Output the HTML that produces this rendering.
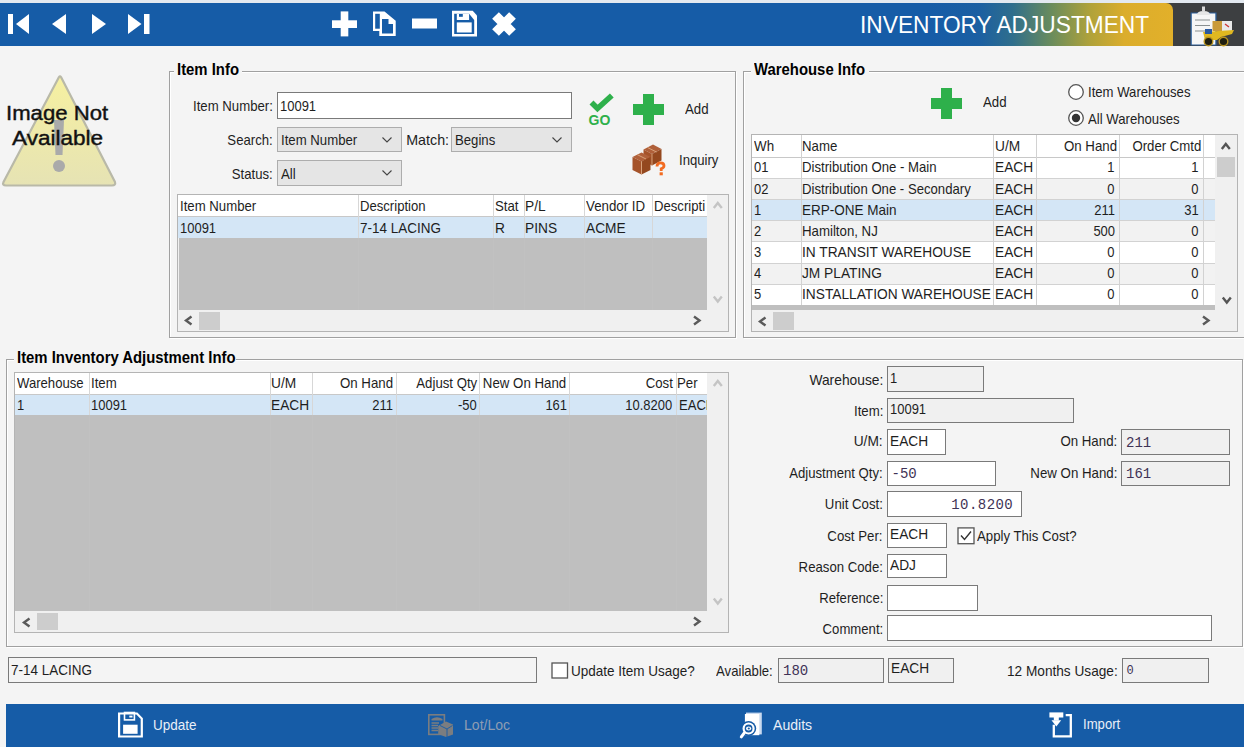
<!DOCTYPE html>
<html><head><meta charset="utf-8"><title>Inventory Adjustment</title>
<style>
html,body{margin:0;padding:0}
body{width:1244px;height:747px;position:relative;overflow:hidden;background:#f4f4f4;font-family:"Liberation Sans",sans-serif;color:#1e1e1e}
.a{position:absolute;box-sizing:border-box}
svg.a{overflow:visible}
.t{position:absolute;white-space:nowrap}
</style></head><body>
<div class="a" style="left:0px;top:0px;width:1244px;height:3px;background:#e3e9f0;"></div>
<div class="a" style="left:0px;top:3px;width:930px;height:43px;background:#165ca7;"></div>
<div class="a" style="left:1160px;top:3px;width:84px;height:43px;background:#3d3f41;"></div>
<div class="a" style="left:930px;top:3px;width:243px;height:43px;background:linear-gradient(90deg,#165ca7 0%,#1b5fa2 20%,#2f6e8c 34%,#6a8c5c 50%,#b0a23a 66%,#dbad2c 80%,#e2b02a 100%);border-top-right-radius:7px;"></div>
<div class="t" style="top:13.82px;font-size:23.5px;line-height:23.5px;color:#ffffff;left:860px;transform-origin:0 0;transform:scaleX(0.967);">INVENTORY ADJUSTMENT</div>
<svg class="a" style="left:0px;top:3px" width="160" height="43" viewBox="0 0 160 43"><rect x="8" y="11" width="5" height="20" fill="#fff"/><polygon points="16,21 29,11 29,31" fill="#fff"/><polygon points="52,21 66,11 66,31" fill="#fff"/><polygon points="92,11 92,31 106,21" fill="#fff"/><polygon points="128,11 128,31 141.5,21" fill="#fff"/><rect x="144" y="11" width="5.5" height="20" fill="#fff"/></svg>
<svg class="a" style="left:320px;top:3px" width="210" height="43" viewBox="0 0 210 43"><rect x="12" y="17.3" width="25" height="7.7" fill="#fff"/><rect x="20.7" y="8.4" width="7.6" height="25" fill="#fff"/><polygon points="53,8.4 64.5,8.4 75.7,17.7 75.7,33 59.3,33 59.3,28.1 53,28.1" fill="#fff"/><rect x="55.2" y="10.8" width="4.6" height="14.9" fill="#165ca7"/><polygon points="62,16 68.5,16 68.5,21 73,21 73,30.5 62,30.5" fill="#165ca7"/><rect x="92" y="15.5" width="25" height="10" fill="#fff"/><polygon points="132,7.8 152.7,7.8 157,12.399999999999999 157,33.4 132,33.4" fill="#fff"/><polygon points="134.2,10.7 149.1,10.7 154.2,17.0 154.2,31.0 134.2,31.0" fill="#165ca7"/><rect x="136.8" y="10.7" width="12.3" height="6.3" fill="#fff"/><rect x="139" y="11.0" width="3.8" height="2.8" fill="#165ca7"/><rect x="136.8" y="19.4" width="14.9" height="10.1" fill="#fff"/><path d="M175.5,12.5 L192.5,29.5 M192.5,12.5 L175.5,29.5" stroke="#fff" stroke-width="9.5"/></svg>
<svg class="a" style="left:1173px;top:3px" width="71" height="43" viewBox="0 0 71 43"><rect x="17.6" y="9.5" width="26" height="33" fill="#2c5f9a"/><rect x="18.8" y="10.5" width="23.5" height="31" fill="#f6f6f6"/><path d="M24,12 Q24,8 30.5,8 Q37,8 37,12 Z" fill="#e6e6e6"/><rect x="29" y="3.5" width="3" height="5" fill="#d8d8d8"/><path d="M22,17 H37 M22,22.5 H37 M22,28 H34" stroke="#8a9090" stroke-width="1.1"/><rect x="39.5" y="18" width="9.5" height="10" fill="#c99a3a"/><rect x="49" y="18" width="10" height="10.5" fill="#e9e9e9"/><path d="M52,21 L56,24" stroke="#c33" stroke-width="1.3"/><polygon points="30,29 61,27 59,31 48,34 44,37 32,37" fill="#e0b820"/><rect x="32" y="26" width="7" height="5" fill="#2a5aa0"/><circle cx="35.5" cy="38.5" r="4.3" fill="#1f1f10" stroke="#b89420" stroke-width="1.4"/><circle cx="50.5" cy="38.5" r="4.3" fill="#1f1f10" stroke="#b89420" stroke-width="1.4"/></svg>
<svg class="a" style="left:0px;top:70px" width="122" height="122" viewBox="0 0 122 122"><defs><linearGradient id="tg" x1="0" y1="0" x2="0" y2="1"><stop offset="0" stop-color="#f6f0a0"/><stop offset="1" stop-color="#e6e3b4"/></linearGradient></defs><path d="M59,7 Q60,5.5 61,7 L115,112 Q116,115.5 112,115.5 L6,115.5 Q2,115.5 3.5,112 Z" fill="url(#tg)" stroke="#b9b9a8" stroke-width="2.2" stroke-linejoin="round"/><path d="M54,50 H64 L62.5,85 H55.5 Z" fill="#aaaaaa"/><circle cx="59" cy="96" r="6" fill="#aaaaaa"/></svg>
<div class="t" style="top:103.17px;font-size:20.5px;line-height:20.5px;color:#111;left:6px;transform-origin:0 0;transform:scaleX(1.08);-webkit-text-stroke:0.4px #111;">Image Not</div>
<div class="t" style="top:127.98px;font-size:20.5px;line-height:20.5px;color:#111;left:11.5px;transform-origin:0 0;transform:scaleX(1.1);-webkit-text-stroke:0.4px #111;">Available</div>
<div class="a" style="left:170px;top:72px;width:567px;height:267px;border:1px solid #ffffff;"></div>
<div class="a" style="left:169px;top:71px;width:567px;height:267px;border:1px solid #a0a0a0;"></div>
<div class="a" style="left:174.2px;top:69px;width:68px;height:5px;background:#f4f4f4;"></div>
<div class="t" style="top:62.10px;font-size:16px;line-height:16px;color:#000;font-weight:700;left:177.2px;transform-origin:0 0;transform:scaleX(0.93);">Item Info</div>
<div class="a" style="left:744px;top:72px;width:505px;height:267px;border:1px solid #ffffff;"></div>
<div class="a" style="left:743px;top:71px;width:505px;height:267px;border:1px solid #a0a0a0;"></div>
<div class="a" style="left:750.6px;top:69px;width:118.4px;height:5px;background:#f4f4f4;"></div>
<div class="t" style="top:62.20px;font-size:16px;line-height:16px;color:#000;font-weight:700;left:753.6px;transform-origin:0 0;transform:scaleX(0.93);">Warehouse Info</div>
<div class="a" style="left:7px;top:360px;width:1237px;height:288px;border:1px solid #ffffff;"></div>
<div class="a" style="left:6px;top:359px;width:1237px;height:288px;border:1px solid #a0a0a0;"></div>
<div class="a" style="left:14.2px;top:357px;width:222px;height:5px;background:#f4f4f4;"></div>
<div class="t" style="top:349.80px;font-size:16px;line-height:16px;color:#000;font-weight:700;left:17.2px;transform-origin:0 0;transform:scaleX(0.93);">Item Inventory Adjustment Info</div>
<div class="t" style="top:98.25px;font-size:15px;line-height:15px;right:971px;transform-origin:100% 0;transform:scaleX(0.879);">Item Number:</div>
<div class="a" style="left:277px;top:92px;width:295px;height:27px;background:#fff;border:1px solid #7a7a7a;box-sizing:border-box;"></div>
<div class="t" style="top:97.75px;font-size:15px;line-height:15px;left:280.2px;transform-origin:0 0;transform:scaleX(0.865);">10091</div>
<div class="t" style="top:131.95px;font-size:15px;line-height:15px;right:971px;transform-origin:100% 0;transform:scaleX(0.877);">Search:</div>
<div class="a" style="left:277px;top:127px;width:125px;height:25px;background:#e5e5e5;border:1px solid #adadad;box-sizing:border-box;"></div>
<div class="t" style="top:131.95px;font-size:15px;line-height:15px;left:281.3px;transform-origin:0 0;transform:scaleX(0.879);">Item Number</div>
<svg class="a" style="left:381px;top:134.5px" width="12" height="10" viewBox="0 0 12 10"><path d="M1.5,2.5 L6,7 L10.5,2.5" fill="none" stroke="#444" stroke-width="1.1"/></svg>
<div class="t" style="top:131.95px;font-size:15px;line-height:15px;right:794.5px;transform-origin:100% 0;transform:scaleX(0.95);">Match:</div>
<div class="a" style="left:451px;top:127px;width:121px;height:25px;background:#e5e5e5;border:1px solid #adadad;box-sizing:border-box;"></div>
<div class="t" style="top:131.95px;font-size:15px;line-height:15px;left:455.3px;transform-origin:0 0;transform:scaleX(0.877);">Begins</div>
<svg class="a" style="left:551px;top:134.5px" width="12" height="10" viewBox="0 0 12 10"><path d="M1.5,2.5 L6,7 L10.5,2.5" fill="none" stroke="#444" stroke-width="1.1"/></svg>
<div class="t" style="top:165.75px;font-size:15px;line-height:15px;right:971px;transform-origin:100% 0;transform:scaleX(0.877);">Status:</div>
<div class="a" style="left:277px;top:160px;width:125px;height:26px;background:#e5e5e5;border:1px solid #adadad;box-sizing:border-box;"></div>
<div class="t" style="top:165.75px;font-size:15px;line-height:15px;left:281.3px;transform-origin:0 0;transform:scaleX(0.885);">All</div>
<svg class="a" style="left:381px;top:168.0px" width="12" height="10" viewBox="0 0 12 10"><path d="M1.5,2.5 L6,7 L10.5,2.5" fill="none" stroke="#444" stroke-width="1.1"/></svg>
<svg class="a" style="left:585px;top:90px" width="34" height="36" viewBox="0 0 34 36"><path d="M6.5,12.5 L12.5,18.5 L26.8,5.5" fill="none" stroke="#2eb04b" stroke-width="5.6"/></svg>
<div class="t" style="top:112.90px;font-size:14px;line-height:14px;color:#2eb04b;font-weight:700;left:588.5px;transform-origin:0 0;">GO</div>
<svg class="a" style="left:633px;top:94px" width="31" height="31" viewBox="0 0 31 31"><rect x="0" y="10" width="31" height="11" fill="#2eb04b"/><rect x="10" y="0" width="11" height="31" fill="#2eb04b"/></svg>
<div class="t" style="top:100.65px;font-size:15px;line-height:15px;left:685.1999999999999px;transform-origin:0 0;transform:scaleX(0.885);">Add</div>
<svg class="a" style="left:630px;top:142px" width="38" height="36" viewBox="0 0 38 36"><polygon points="13.5,7.5 23,2.5 31.5,7 22,12" fill="#b0603a"/><polygon points="13.5,7.5 22,12 22,23.5 13.5,19" fill="#a5532a"/><polygon points="22,12 31.5,7 31.5,18.5 22,23.5" fill="#94481f"/><polygon points="2.5,15 11.5,10.5 20.5,15 11.5,19.5" fill="#b0603a"/><polygon points="2.5,15 11.5,19.5 11.5,32.5 2.5,28" fill="#a5532a"/><polygon points="11.5,19.5 20.5,15 20.5,28 11.5,32.5" fill="#94481f"/><path d="M17.5,5.5 L26.5,10 M7,12.5 L16,17 M11.5,19.5 V32.5 M22,12 V23.5" fill="none" stroke="#dba77f" stroke-width="0.9"/><path d="M27,24.5 Q27,20.8 30.5,20.8 Q34,20.8 34,23.8 Q34,25.8 31.2,26.8 V29" fill="none" stroke="#f26b21" stroke-width="2.8"/><rect x="29.6" y="30.3" width="3.2" height="3" fill="#f26b21"/></svg>
<div class="t" style="top:151.65px;font-size:15px;line-height:15px;left:678.5999999999999px;transform-origin:0 0;transform:scaleX(0.876);">Inquiry</div>
<div class="a" style="left:177px;top:194px;width:552px;height:138px;background:#f0f0f0;border:1px solid #b4b4b4;box-sizing:border-box;"></div>
<div class="a" style="left:178px;top:195px;width:529px;height:21px;background:#ffffff;"></div>
<div class="a" style="left:178px;top:216px;width:529px;height:1px;background:#c8c8c8;"></div>
<div class="a" style="left:178px;top:217px;width:529px;height:21px;background:#d4e6f6;"></div>
<div class="a" style="left:179px;top:238px;width:528px;height:72px;background:#bfbfbf;"></div>
<div class="a" style="left:358px;top:195px;width:1px;height:43px;background:#d7d7d7;"></div>
<div class="a" style="left:358px;top:238px;width:1px;height:72px;background:#c1c1c1;"></div>
<div class="a" style="left:493px;top:195px;width:1px;height:43px;background:#d7d7d7;"></div>
<div class="a" style="left:493px;top:238px;width:1px;height:72px;background:#c1c1c1;"></div>
<div class="a" style="left:524px;top:195px;width:1px;height:43px;background:#d7d7d7;"></div>
<div class="a" style="left:524px;top:238px;width:1px;height:72px;background:#c1c1c1;"></div>
<div class="a" style="left:584px;top:195px;width:1px;height:43px;background:#d7d7d7;"></div>
<div class="a" style="left:584px;top:238px;width:1px;height:72px;background:#c1c1c1;"></div>
<div class="a" style="left:652px;top:195px;width:1px;height:43px;background:#d7d7d7;"></div>
<div class="a" style="left:652px;top:238px;width:1px;height:72px;background:#c1c1c1;"></div>
<div class="t" style="top:198.35px;font-size:15px;line-height:15px;left:180.20000000000002px;transform-origin:0 0;transform:scaleX(0.879);">Item Number</div>
<div class="t" style="top:198.35px;font-size:15px;line-height:15px;left:359.90000000000003px;transform-origin:0 0;transform:scaleX(0.874);">Description</div>
<div class="t" style="top:198.35px;font-size:15px;line-height:15px;left:494.90000000000003px;transform-origin:0 0;transform:scaleX(0.881);">Stat</div>
<div class="t" style="top:198.35px;font-size:15px;line-height:15px;left:524.5px;transform-origin:0 0;transform:scaleX(0.915);">P/L</div>
<div class="t" style="top:198.35px;font-size:15px;line-height:15px;left:585.8px;transform-origin:0 0;transform:scaleX(0.887);">Vendor ID</div>
<div class="t" style="top:198.35px;font-size:15px;line-height:15px;left:653.8px;transform-origin:0 0;transform:scaleX(0.875);">Descripti</div>
<div class="t" style="top:219.65px;font-size:15px;line-height:15px;left:180.20000000000002px;transform-origin:0 0;transform:scaleX(0.865);">10091</div>
<div class="t" style="top:219.65px;font-size:15px;line-height:15px;left:359.90000000000003px;transform-origin:0 0;transform:scaleX(0.898);">7-14 LACING</div>
<div class="t" style="top:219.65px;font-size:15px;line-height:15px;left:494.90000000000003px;transform-origin:0 0;transform:scaleX(0.915);">R</div>
<div class="t" style="top:219.65px;font-size:15px;line-height:15px;left:524.5px;transform-origin:0 0;transform:scaleX(0.915);">PINS</div>
<div class="t" style="top:219.65px;font-size:15px;line-height:15px;left:585.8px;transform-origin:0 0;transform:scaleX(0.915);">ACME</div>
<div class="a" style="left:707px;top:195px;width:21px;height:136px;background:#f0f0f0;"></div>
<svg class="a" style="left:713px;top:201px" width="10" height="10" viewBox="0 0 10 10"><path d="M0.8,7 L4.8,2 L8.8,7" fill="none" stroke="#c4c4c4" stroke-width="2.4"/></svg>
<svg class="a" style="left:713px;top:295px" width="10" height="10" viewBox="0 0 10 10"><path d="M0.8,1.5 L4.8,6.5 L8.8,1.5" fill="none" stroke="#c4c4c4" stroke-width="2.4"/></svg>
<div class="a" style="left:178px;top:310px;width:529px;height:21px;background:#f0f0f0;"></div>
<svg class="a" style="left:183.5px;top:316px" width="10" height="10" viewBox="0 0 10 10"><path d="M7.5,0.5 L2,4.5 L7.5,8.5" fill="none" stroke="#5a5a5a" stroke-width="2.4"/></svg>
<div class="a" style="left:199px;top:311.5px;width:21px;height:18px;background:#cdcdcd;"></div>
<svg class="a" style="left:692.5px;top:316px" width="10" height="10" viewBox="0 0 10 10"><path d="M1,0.5 L6.5,4.5 L1,8.5" fill="none" stroke="#5a5a5a" stroke-width="2.4"/></svg>
<svg class="a" style="left:931px;top:88px" width="31" height="31" viewBox="0 0 31 31"><rect x="0" y="10" width="31" height="11" fill="#2eb04b"/><rect x="10" y="0" width="11" height="31" fill="#2eb04b"/></svg>
<div class="t" style="top:94.35px;font-size:15px;line-height:15px;left:982.8px;transform-origin:0 0;transform:scaleX(0.885);">Add</div>
<svg class="a" style="left:1066px;top:82px" width="20" height="46" viewBox="0 0 20 46"><circle cx="10" cy="10" r="7.3" fill="#fff" stroke="#555" stroke-width="1.3"/><circle cx="10" cy="36" r="7.3" fill="#fff" stroke="#555" stroke-width="1.3"/><circle cx="10" cy="36" r="4.2" fill="#333"/></svg>
<div class="t" style="top:84.35px;font-size:15px;line-height:15px;left:1087.5px;transform-origin:0 0;transform:scaleX(0.876);">Item Warehouses</div>
<div class="t" style="top:110.85px;font-size:15px;line-height:15px;left:1087.5px;transform-origin:0 0;transform:scaleX(0.877);">All Warehouses</div>
<div class="a" style="left:751px;top:134px;width:487px;height:198px;background:#f0f0f0;border:1px solid #b4b4b4;box-sizing:border-box;"></div>
<div class="a" style="left:752px;top:135px;width:463px;height:22px;background:#ffffff;"></div>
<div class="a" style="left:752px;top:157px;width:463px;height:1px;background:#c8c8c8;"></div>
<div class="a" style="left:752px;top:158.0px;width:463px;height:21.1px;background:#ffffff;"></div>
<div class="a" style="left:752px;top:178.1px;width:463px;height:1px;background:#d2d2d2;"></div>
<div class="t" style="top:159.45px;font-size:15px;line-height:15px;left:753.5999999999999px;transform-origin:0 0;transform:scaleX(0.865);">01</div>
<div class="t" style="top:159.45px;font-size:15px;line-height:15px;left:802.3px;transform-origin:0 0;transform:scaleX(0.877);">Distribution One - Main</div>
<div class="t" style="top:159.45px;font-size:15px;line-height:15px;left:994.8px;transform-origin:0 0;transform:scaleX(0.915);">EACH</div>
<div class="t" style="top:159.45px;font-size:15px;line-height:15px;right:129.20000000000005px;transform-origin:100% 0;transform:scaleX(0.865);">1</div>
<div class="t" style="top:159.45px;font-size:15px;line-height:15px;right:45.200000000000045px;transform-origin:100% 0;transform:scaleX(0.865);">1</div>
<div class="a" style="left:752px;top:179.1px;width:463px;height:21.1px;background:#f2f2f2;"></div>
<div class="a" style="left:752px;top:199.2px;width:463px;height:1px;background:#d2d2d2;"></div>
<div class="t" style="top:180.55px;font-size:15px;line-height:15px;left:753.5999999999999px;transform-origin:0 0;transform:scaleX(0.865);">02</div>
<div class="t" style="top:180.55px;font-size:15px;line-height:15px;left:802.3px;transform-origin:0 0;transform:scaleX(0.876);">Distribution One - Secondary</div>
<div class="t" style="top:180.55px;font-size:15px;line-height:15px;left:994.8px;transform-origin:0 0;transform:scaleX(0.915);">EACH</div>
<div class="t" style="top:180.55px;font-size:15px;line-height:15px;right:129.20000000000005px;transform-origin:100% 0;transform:scaleX(0.865);">0</div>
<div class="t" style="top:180.55px;font-size:15px;line-height:15px;right:45.200000000000045px;transform-origin:100% 0;transform:scaleX(0.865);">0</div>
<div class="a" style="left:752px;top:200.2px;width:463px;height:21.1px;background:#d4e6f6;"></div>
<div class="a" style="left:752px;top:220.3px;width:463px;height:1px;background:#d2d2d2;"></div>
<div class="t" style="top:201.65px;font-size:15px;line-height:15px;left:753.5999999999999px;transform-origin:0 0;transform:scaleX(0.865);">1</div>
<div class="t" style="top:201.65px;font-size:15px;line-height:15px;left:802.3px;transform-origin:0 0;transform:scaleX(0.901);">ERP-ONE Main</div>
<div class="t" style="top:201.65px;font-size:15px;line-height:15px;left:994.8px;transform-origin:0 0;transform:scaleX(0.915);">EACH</div>
<div class="t" style="top:201.65px;font-size:15px;line-height:15px;right:129.20000000000005px;transform-origin:100% 0;transform:scaleX(0.865);">211</div>
<div class="t" style="top:201.65px;font-size:15px;line-height:15px;right:45.200000000000045px;transform-origin:100% 0;transform:scaleX(0.865);">31</div>
<div class="a" style="left:752px;top:221.3px;width:463px;height:21.1px;background:#f2f2f2;"></div>
<div class="a" style="left:752px;top:241.4px;width:463px;height:1px;background:#d2d2d2;"></div>
<div class="t" style="top:222.75px;font-size:15px;line-height:15px;left:753.5999999999999px;transform-origin:0 0;transform:scaleX(0.865);">2</div>
<div class="t" style="top:222.75px;font-size:15px;line-height:15px;left:802.3px;transform-origin:0 0;transform:scaleX(0.883);">Hamilton, NJ</div>
<div class="t" style="top:222.75px;font-size:15px;line-height:15px;left:994.8px;transform-origin:0 0;transform:scaleX(0.915);">EACH</div>
<div class="t" style="top:222.75px;font-size:15px;line-height:15px;right:129.20000000000005px;transform-origin:100% 0;transform:scaleX(0.865);">500</div>
<div class="t" style="top:222.75px;font-size:15px;line-height:15px;right:45.200000000000045px;transform-origin:100% 0;transform:scaleX(0.865);">0</div>
<div class="a" style="left:752px;top:242.4px;width:463px;height:21.1px;background:#ffffff;"></div>
<div class="a" style="left:752px;top:262.5px;width:463px;height:1px;background:#d2d2d2;"></div>
<div class="t" style="top:243.85px;font-size:15px;line-height:15px;left:753.5999999999999px;transform-origin:0 0;transform:scaleX(0.865);">3</div>
<div class="t" style="top:243.85px;font-size:15px;line-height:15px;left:802.3px;transform-origin:0 0;transform:scaleX(0.915);">IN TRANSIT WAREHOUSE</div>
<div class="t" style="top:243.85px;font-size:15px;line-height:15px;left:994.8px;transform-origin:0 0;transform:scaleX(0.915);">EACH</div>
<div class="t" style="top:243.85px;font-size:15px;line-height:15px;right:129.20000000000005px;transform-origin:100% 0;transform:scaleX(0.865);">0</div>
<div class="t" style="top:243.85px;font-size:15px;line-height:15px;right:45.200000000000045px;transform-origin:100% 0;transform:scaleX(0.865);">0</div>
<div class="a" style="left:752px;top:263.5px;width:463px;height:21.1px;background:#f2f2f2;"></div>
<div class="a" style="left:752px;top:283.6px;width:463px;height:1px;background:#d2d2d2;"></div>
<div class="t" style="top:264.95px;font-size:15px;line-height:15px;left:753.5999999999999px;transform-origin:0 0;transform:scaleX(0.865);">4</div>
<div class="t" style="top:264.95px;font-size:15px;line-height:15px;left:802.3px;transform-origin:0 0;transform:scaleX(0.915);">JM PLATING</div>
<div class="t" style="top:264.95px;font-size:15px;line-height:15px;left:994.8px;transform-origin:0 0;transform:scaleX(0.915);">EACH</div>
<div class="t" style="top:264.95px;font-size:15px;line-height:15px;right:129.20000000000005px;transform-origin:100% 0;transform:scaleX(0.865);">0</div>
<div class="t" style="top:264.95px;font-size:15px;line-height:15px;right:45.200000000000045px;transform-origin:100% 0;transform:scaleX(0.865);">0</div>
<div class="a" style="left:752px;top:284.6px;width:463px;height:21.1px;background:#ffffff;"></div>
<div class="a" style="left:752px;top:304.7px;width:463px;height:1px;background:#d2d2d2;"></div>
<div class="t" style="top:286.05px;font-size:15px;line-height:15px;left:753.5999999999999px;transform-origin:0 0;transform:scaleX(0.865);">5</div>
<div class="t" style="top:286.05px;font-size:15px;line-height:15px;left:802.3px;transform-origin:0 0;transform:scaleX(0.915);">INSTALLATION WAREHOUSE</div>
<div class="t" style="top:286.05px;font-size:15px;line-height:15px;left:994.8px;transform-origin:0 0;transform:scaleX(0.915);">EACH</div>
<div class="t" style="top:286.05px;font-size:15px;line-height:15px;right:129.20000000000005px;transform-origin:100% 0;transform:scaleX(0.865);">0</div>
<div class="t" style="top:286.05px;font-size:15px;line-height:15px;right:45.200000000000045px;transform-origin:100% 0;transform:scaleX(0.865);">0</div>
<div class="a" style="left:801px;top:135px;width:1px;height:170px;background:#d2d2d2;"></div>
<div class="a" style="left:993px;top:135px;width:1px;height:170px;background:#d2d2d2;"></div>
<div class="a" style="left:1036px;top:135px;width:1px;height:170px;background:#d2d2d2;"></div>
<div class="a" style="left:1119px;top:135px;width:1px;height:170px;background:#d2d2d2;"></div>
<div class="a" style="left:1203px;top:135px;width:1px;height:170px;background:#d2d2d2;"></div>
<div class="t" style="top:138.25px;font-size:15px;line-height:15px;left:753.5999999999999px;transform-origin:0 0;transform:scaleX(0.892);">Wh</div>
<div class="t" style="top:138.25px;font-size:15px;line-height:15px;left:802.3px;transform-origin:0 0;transform:scaleX(0.881);">Name</div>
<div class="t" style="top:138.25px;font-size:15px;line-height:15px;left:994.8px;transform-origin:0 0;transform:scaleX(0.915);">U/M</div>
<div class="t" style="top:138.25px;font-size:15px;line-height:15px;right:127px;transform-origin:100% 0;transform:scaleX(0.885);">On Hand</div>
<div class="t" style="top:138.25px;font-size:15px;line-height:15px;right:43px;transform-origin:100% 0;transform:scaleX(0.88);">Order Cmtd</div>
<div class="a" style="left:752px;top:305px;width:463px;height:5px;background:#bfbfbf;"></div>
<div class="a" style="left:1215px;top:135px;width:22px;height:196px;background:#f0f0f0;"></div>
<svg class="a" style="left:1220.5px;top:142px" width="10" height="10" viewBox="0 0 10 10"><path d="M0.8,7 L4.8,2 L8.8,7" fill="none" stroke="#555" stroke-width="2.4"/></svg>
<div class="a" style="left:1217px;top:157px;width:18px;height:20px;background:#cdcdcd;"></div>
<svg class="a" style="left:1221.5px;top:295.5px" width="10" height="10" viewBox="0 0 10 10"><path d="M0.8,1.5 L4.8,6.5 L8.8,1.5" fill="none" stroke="#555" stroke-width="2.4"/></svg>
<div class="a" style="left:752px;top:310px;width:463px;height:21px;background:#f0f0f0;"></div>
<svg class="a" style="left:757.5px;top:316.5px" width="10" height="10" viewBox="0 0 10 10"><path d="M7.5,0.5 L2,4.5 L7.5,8.5" fill="none" stroke="#5a5a5a" stroke-width="2.4"/></svg>
<div class="a" style="left:773px;top:312.3px;width:21px;height:17.3px;background:#cdcdcd;"></div>
<svg class="a" style="left:1201.5px;top:316px" width="10" height="10" viewBox="0 0 10 10"><path d="M1,0.5 L6.5,4.5 L1,8.5" fill="none" stroke="#5a5a5a" stroke-width="2.4"/></svg>
<div class="a" style="left:14px;top:372px;width:715px;height:261px;background:#f0f0f0;border:1px solid #b4b4b4;box-sizing:border-box;"></div>
<div class="a" style="left:15px;top:373px;width:692px;height:21px;background:#ffffff;"></div>
<div class="a" style="left:15px;top:394px;width:692px;height:1px;background:#c8c8c8;"></div>
<div class="a" style="left:15px;top:395px;width:692px;height:20px;background:#d4e6f6;"></div>
<div class="a" style="left:15px;top:415px;width:692px;height:196px;background:#bfbfbf;"></div>
<div class="a" style="left:89px;top:373px;width:1px;height:42px;background:#d7d7d7;"></div>
<div class="a" style="left:89px;top:415px;width:1px;height:196px;background:#c1c1c1;"></div>
<div class="a" style="left:270px;top:373px;width:1px;height:42px;background:#d7d7d7;"></div>
<div class="a" style="left:270px;top:415px;width:1px;height:196px;background:#c1c1c1;"></div>
<div class="a" style="left:312px;top:373px;width:1px;height:42px;background:#d7d7d7;"></div>
<div class="a" style="left:312px;top:415px;width:1px;height:196px;background:#c1c1c1;"></div>
<div class="a" style="left:396px;top:373px;width:1px;height:42px;background:#d7d7d7;"></div>
<div class="a" style="left:396px;top:415px;width:1px;height:196px;background:#c1c1c1;"></div>
<div class="a" style="left:479px;top:373px;width:1px;height:42px;background:#d7d7d7;"></div>
<div class="a" style="left:479px;top:415px;width:1px;height:196px;background:#c1c1c1;"></div>
<div class="a" style="left:569px;top:373px;width:1px;height:42px;background:#d7d7d7;"></div>
<div class="a" style="left:569px;top:415px;width:1px;height:196px;background:#c1c1c1;"></div>
<div class="a" style="left:676px;top:373px;width:1px;height:42px;background:#d7d7d7;"></div>
<div class="a" style="left:676px;top:415px;width:1px;height:196px;background:#c1c1c1;"></div>
<div class="t" style="top:375.45px;font-size:15px;line-height:15px;left:16.8px;transform-origin:0 0;transform:scaleX(0.875);">Warehouse</div>
<div class="t" style="top:375.45px;font-size:15px;line-height:15px;left:91.2px;transform-origin:0 0;transform:scaleX(0.881);">Item</div>
<div class="t" style="top:375.45px;font-size:15px;line-height:15px;left:271.3px;transform-origin:0 0;transform:scaleX(0.915);">U/M</div>
<div class="t" style="top:375.45px;font-size:15px;line-height:15px;right:850.9px;transform-origin:100% 0;transform:scaleX(0.885);">On Hand</div>
<div class="t" style="top:375.45px;font-size:15px;line-height:15px;right:766.9px;transform-origin:100% 0;transform:scaleX(0.88);">Adjust Qty</div>
<div class="t" style="top:375.45px;font-size:15px;line-height:15px;right:677.3px;transform-origin:100% 0;transform:scaleX(0.885);">New On Hand</div>
<div class="t" style="top:375.45px;font-size:15px;line-height:15px;right:571.3px;transform-origin:100% 0;transform:scaleX(0.881);">Cost</div>
<div class="t" style="top:375.45px;font-size:15px;line-height:15px;left:677.3px;transform-origin:0 0;transform:scaleX(0.885);">Per</div>
<div class="t" style="top:396.55px;font-size:15px;line-height:15px;left:16.8px;transform-origin:0 0;transform:scaleX(0.865);">1</div>
<div class="t" style="top:396.55px;font-size:15px;line-height:15px;left:91.2px;transform-origin:0 0;transform:scaleX(0.865);">10091</div>
<div class="t" style="top:396.55px;font-size:15px;line-height:15px;left:271.3px;transform-origin:0 0;transform:scaleX(0.915);">EACH</div>
<div class="t" style="top:396.55px;font-size:15px;line-height:15px;right:850.9px;transform-origin:100% 0;transform:scaleX(0.865);">211</div>
<div class="t" style="top:396.55px;font-size:15px;line-height:15px;right:766.9px;transform-origin:100% 0;transform:scaleX(0.865);">-50</div>
<div class="t" style="top:396.55px;font-size:15px;line-height:15px;right:677.3px;transform-origin:100% 0;transform:scaleX(0.865);">161</div>
<div class="t" style="top:396.55px;font-size:15px;line-height:15px;right:571.3px;transform-origin:100% 0;transform:scaleX(0.865);">10.8200</div>
<div class="a" style="left:678px;top:395px;width:29px;height:20px;overflow:hidden"><div class="t" style="left:0.5px;top:1.55px;font-size:15px;line-height:15px;transform-origin:0 0;transform:scaleX(0.87)">EACH</div></div>
<div class="a" style="left:707px;top:373px;width:21px;height:259px;background:#f0f0f0;"></div>
<svg class="a" style="left:713px;top:379px" width="10" height="10" viewBox="0 0 10 10"><path d="M0.8,7 L4.8,2 L8.8,7" fill="none" stroke="#c4c4c4" stroke-width="2.4"/></svg>
<svg class="a" style="left:713px;top:596.5px" width="10" height="10" viewBox="0 0 10 10"><path d="M0.8,1.5 L4.8,6.5 L8.8,1.5" fill="none" stroke="#c4c4c4" stroke-width="2.4"/></svg>
<div class="a" style="left:15px;top:611px;width:692px;height:21px;background:#f0f0f0;"></div>
<svg class="a" style="left:21.5px;top:617.5px" width="10" height="10" viewBox="0 0 10 10"><path d="M7.5,0.5 L2,4.5 L7.5,8.5" fill="none" stroke="#5a5a5a" stroke-width="2.4"/></svg>
<div class="a" style="left:37px;top:612.8px;width:21px;height:17.7px;background:#cdcdcd;"></div>
<svg class="a" style="left:692.5px;top:617px" width="10" height="10" viewBox="0 0 10 10"><path d="M1,0.5 L6.5,4.5 L1,8.5" fill="none" stroke="#5a5a5a" stroke-width="2.4"/></svg>
<div class="t" style="top:371.65px;font-size:15px;line-height:15px;right:361px;transform-origin:100% 0;transform:scaleX(0.92);">Warehouse:</div>
<div class="a" style="left:887px;top:366px;width:97px;height:26px;background:#f0f0f0;border:1px solid #7a7a7a;box-sizing:border-box;"></div>
<div class="t" style="top:370.25px;font-size:15px;line-height:15px;left:890.3px;transform-origin:0 0;transform:scaleX(0.865);">1</div>
<div class="t" style="top:402.55px;font-size:15px;line-height:15px;right:361px;transform-origin:100% 0;transform:scaleX(0.881);">Item:</div>
<div class="a" style="left:887px;top:398px;width:187px;height:25px;background:#f0f0f0;border:1px solid #7a7a7a;box-sizing:border-box;"></div>
<div class="t" style="top:401.25px;font-size:15px;line-height:15px;left:890.3px;transform-origin:0 0;transform:scaleX(0.865);">10091</div>
<div class="t" style="top:433.45px;font-size:15px;line-height:15px;right:361px;transform-origin:100% 0;transform:scaleX(0.915);">U/M:</div>
<div class="a" style="left:887px;top:429px;width:59px;height:26px;background:#fff;border:1px solid #7a7a7a;box-sizing:border-box;"></div>
<div class="t" style="top:432.75px;font-size:15px;line-height:15px;left:890.3px;transform-origin:0 0;transform:scaleX(0.915);">EACH</div>
<div class="t" style="top:433.45px;font-size:15px;line-height:15px;right:127px;transform-origin:100% 0;transform:scaleX(0.885);">On Hand:</div>
<div class="a" style="left:1121px;top:429px;width:109px;height:26px;background:#f0f0f0;border:1px solid #7a7a7a;box-sizing:border-box;"></div>
<div class="t" style="top:435.56px;font-size:14px;line-height:14px;font-family:'Liberation Mono', monospace;color:#3f3356;left:1126px;transform-origin:0 0;">211</div>
<div class="t" style="top:464.55px;font-size:15px;line-height:15px;right:361px;transform-origin:100% 0;transform:scaleX(0.877);">Adjustment Qty:</div>
<div class="a" style="left:887px;top:461px;width:109px;height:25px;background:#fff;border:1px solid #7a7a7a;box-sizing:border-box;"></div>
<div class="t" style="top:466.66px;font-size:14px;line-height:14px;font-family:'Liberation Mono', monospace;color:#3f3356;left:891.5px;transform-origin:0 0;">-50</div>
<div class="t" style="top:464.55px;font-size:15px;line-height:15px;right:127px;transform-origin:100% 0;transform:scaleX(0.885);">New On Hand:</div>
<div class="a" style="left:1121px;top:461px;width:109px;height:25px;background:#f0f0f0;border:1px solid #7a7a7a;box-sizing:border-box;"></div>
<div class="t" style="top:466.66px;font-size:14px;line-height:14px;font-family:'Liberation Mono', monospace;color:#3f3356;left:1126px;transform-origin:0 0;">161</div>
<div class="t" style="top:495.95px;font-size:15px;line-height:15px;right:361px;transform-origin:100% 0;transform:scaleX(0.881);">Unit Cost:</div>
<div class="a" style="left:887px;top:491px;width:135px;height:26px;background:#fff;border:1px solid #7a7a7a;box-sizing:border-box;"></div>
<div class="t" style="top:498.36px;font-size:14px;line-height:14px;font-family:'Liberation Mono', monospace;color:#3f3356;right:230.79999999999995px;transform-origin:100% 0;letter-spacing:0.45px;">10.8200</div>
<div class="t" style="top:527.55px;font-size:15px;line-height:15px;right:361px;transform-origin:100% 0;transform:scaleX(0.883);">Cost Per:</div>
<div class="a" style="left:887px;top:523px;width:60px;height:25px;background:#fff;border:1px solid #7a7a7a;box-sizing:border-box;"></div>
<div class="t" style="top:525.75px;font-size:15px;line-height:15px;left:890.3px;transform-origin:0 0;transform:scaleX(0.915);">EACH</div>
<svg class="a" style="left:957px;top:527px" width="18" height="18" viewBox="0 0 18 18"><rect x="1" y="0.9" width="16" height="15.8" fill="#fff" stroke="#555" stroke-width="1.3"/><path d="M4,8.5 L7.5,12.5 L14,4.5" fill="none" stroke="#333" stroke-width="1.4"/></svg>
<div class="t" style="top:527.55px;font-size:15px;line-height:15px;left:976.8px;transform-origin:0 0;transform:scaleX(0.88);">Apply This Cost?</div>
<div class="t" style="top:558.75px;font-size:15px;line-height:15px;right:361px;transform-origin:100% 0;transform:scaleX(0.879);">Reason Code:</div>
<div class="a" style="left:887px;top:554px;width:60px;height:24px;background:#fff;border:1px solid #7a7a7a;box-sizing:border-box;"></div>
<div class="t" style="top:556.75px;font-size:15px;line-height:15px;left:890.3px;transform-origin:0 0;transform:scaleX(0.915);">ADJ</div>
<div class="t" style="top:589.75px;font-size:15px;line-height:15px;right:361px;transform-origin:100% 0;transform:scaleX(0.875);">Reference:</div>
<div class="a" style="left:887px;top:585px;width:91px;height:26px;background:#fff;border:1px solid #7a7a7a;box-sizing:border-box;"></div>
<div class="t" style="top:620.65px;font-size:15px;line-height:15px;right:361px;transform-origin:100% 0;transform:scaleX(0.876);">Comment:</div>
<div class="a" style="left:887px;top:615px;width:325px;height:26px;background:#fff;border:1px solid #7a7a7a;box-sizing:border-box;"></div>
<div class="a" style="left:8px;top:657px;width:529px;height:26px;background:#f4f4f4;border:1px solid #7a7a7a;box-sizing:border-box;"></div>
<div class="t" style="top:661.95px;font-size:15px;line-height:15px;left:11.3px;transform-origin:0 0;transform:scaleX(0.898);">7-14 LACING</div>
<svg class="a" style="left:551px;top:662px" width="18" height="18" viewBox="0 0 18 18"><rect x="1" y="1" width="15.5" height="15" fill="#fff" stroke="#555" stroke-width="1.3"/></svg>
<div class="t" style="top:662.65px;font-size:15px;line-height:15px;left:570.8px;transform-origin:0 0;transform:scaleX(0.9);">Update Item Usage?</div>
<div class="t" style="top:662.65px;font-size:15px;line-height:15px;right:470.79999999999995px;transform-origin:100% 0;transform:scaleX(0.875);">Available:</div>
<div class="a" style="left:778px;top:658px;width:106px;height:25px;background:#f0f0f0;border:1px solid #7a7a7a;box-sizing:border-box;"></div>
<div class="t" style="top:664.36px;font-size:14px;line-height:14px;font-family:'Liberation Mono', monospace;color:#3f3356;left:783px;transform-origin:0 0;">180</div>
<div class="a" style="left:888px;top:658px;width:66px;height:25px;background:#f0f0f0;border:1px solid #7a7a7a;box-sizing:border-box;"></div>
<div class="t" style="top:660.25px;font-size:15px;line-height:15px;left:890.8px;transform-origin:0 0;transform:scaleX(0.915);">EACH</div>
<div class="t" style="top:662.65px;font-size:15px;line-height:15px;right:126px;transform-origin:100% 0;transform:scaleX(0.91);">12 Months Usage:</div>
<div class="a" style="left:1122px;top:658px;width:87px;height:25px;background:#f0f0f0;border:1px solid #7a7a7a;box-sizing:border-box;"></div>
<div class="t" style="top:665.38px;font-size:12px;line-height:12px;font-family:'Liberation Mono', monospace;color:#3f3356;left:1126.5px;transform-origin:0 0;">0</div>
<div class="a" style="left:6px;top:704px;width:1238px;height:43px;background:#165ca7;"></div>
<svg class="a" style="left:110px;top:706px" width="40" height="40" viewBox="0 0 40 40"><path d="M9.1,7.5 H26.9 L31.8,12.6 V30.5 H9.1 Z" fill="none" stroke="#fff" stroke-width="2.2"/><rect x="14.5" y="6.5" width="9.9" height="7.4" fill="none" stroke="#fff" stroke-width="1.6"/><rect x="19.3" y="9.6" width="3.2" height="1.9" fill="#fff"/><rect x="13.1" y="18.7" width="14.5" height="9.1" fill="#fff"/></svg>
<div class="t" style="top:717.67px;font-size:14.5px;line-height:14.5px;color:#e9eff8;left:153.4px;transform-origin:0 0;transform:scaleX(0.93);">Update</div>
<svg class="a" style="left:420px;top:706px" width="40" height="40" viewBox="0 0 40 40"><rect x="8.8" y="8.8" width="15.6" height="19.6" fill="none" stroke="#7b7d80" stroke-width="1.6"/><path d="M11.5,13 Q17,9.5 22.5,13 V14.5 H11.5 Z" fill="#7b7d80"/><path d="M11.5,17 H19 M11.5,19.5 H18 M11.5,22 H18 M11.5,24.5 H18" stroke="#7b7d80" stroke-width="1.5"/><polygon points="18.2,20 26,15.5 33,18.5 33,28.5 26,31 18.2,28" fill="#7b7d80"/><path d="M20,19.5 L27,23 L32.5,19.5 M27,23 V31" fill="none" stroke="#165ca7" stroke-width="0.9"/></svg>
<div class="t" style="top:717.88px;font-size:14.5px;line-height:14.5px;color:#8d9cb3;left:463.7px;transform-origin:0 0;transform:scaleX(0.97);">Lot/Loc</div>
<svg class="a" style="left:732px;top:706px" width="40" height="40" viewBox="0 0 40 40"><rect x="14" y="6.6" width="15.8" height="21.8" fill="#c9daf0"/><rect x="12.9" y="8" width="14.4" height="21.2" fill="#fff"/><circle cx="16.6" cy="22.5" r="7.6" fill="#165ca7"/><circle cx="16.6" cy="22.5" r="5" fill="none" stroke="#fff" stroke-width="2.2"/><ellipse cx="16.6" cy="22.5" rx="2.6" ry="1.9" fill="#fff"/><circle cx="16.8" cy="22.5" r="1.1" fill="#165ca7"/><path d="M12.3,26.8 L9.3,30.8" stroke="#fff" stroke-width="3" stroke-linecap="round"/></svg>
<div class="t" style="top:717.67px;font-size:14.5px;line-height:14.5px;color:#e9eff8;left:773.4px;transform-origin:0 0;transform:scaleX(0.97);">Audits</div>
<svg class="a" style="left:1040px;top:706px" width="40" height="40" viewBox="0 0 40 40"><rect x="9.4" y="6.4" width="13.9" height="5.1" fill="#fff"/><rect x="13.8" y="11" width="5" height="3.5" fill="#fff"/><polygon points="11.5,14.2 21.2,14.2 16.3,20.6" fill="#fff"/><path d="M25.7,9.2 H30.8 V30.4 H13.8 V18.7" fill="none" stroke="#fff" stroke-width="2.3"/></svg>
<div class="t" style="top:717.47px;font-size:14.5px;line-height:14.5px;color:#e9eff8;left:1083px;transform-origin:0 0;transform:scaleX(0.905);">Import</div>
</body></html>
